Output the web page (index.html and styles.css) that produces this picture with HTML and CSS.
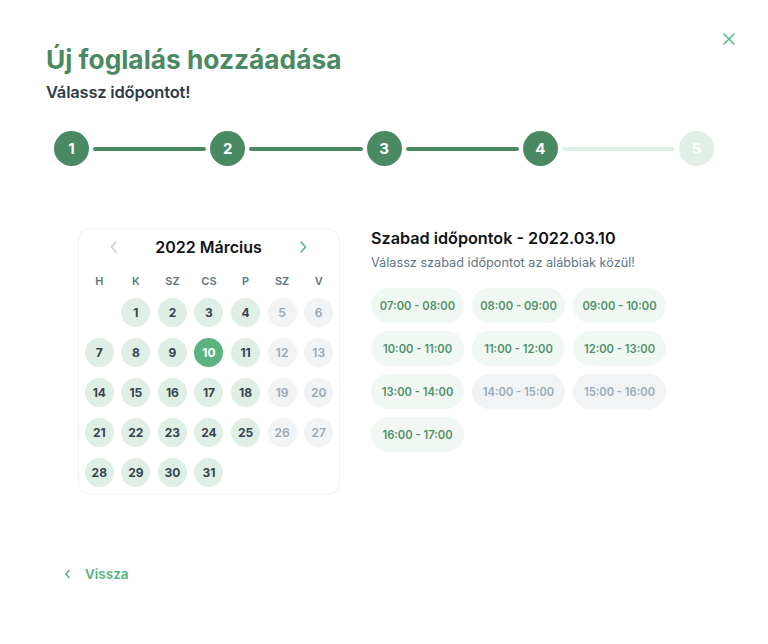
FILE: index.html
```html
<!DOCTYPE html>
<html lang="hu">
<head>
<meta charset="utf-8">
<title>Új foglalás hozzáadása</title>
<link rel="stylesheet" href="styles.css">
</head>
<body>
<div class="modal">
  <div class="header">
    <div class="heading">
      <h1 class="title">Új foglalás hozzáadása</h1>
      <p class="subtitle">Válassz időpontot!</p>
    </div>
    <button class="close" aria-label="Bezárás">
      <svg width="12" height="12" viewBox="0 0 12 12"><path d="M1 1L11 11M11 1L1 11" stroke="currentColor" stroke-width="1.6" stroke-linecap="round"/></svg>
    </button>
  </div>

  <div class="steps">
    <div class="step done">1</div><div class="line done"></div>
    <div class="step done">2</div><div class="line done"></div>
    <div class="step done">3</div><div class="line done"></div>
    <div class="step done">4</div><div class="line"></div>
    <div class="step">5</div>
  </div>

  <div class="content">
    <div class="calendar">
      <div class="cal-head">
        <span class="nav prev"><svg width="8" height="12" viewBox="0 0 8 12"><path d="M6 1L1.5 6L6 11" fill="none" stroke="currentColor" stroke-width="1.6" stroke-linecap="round" stroke-linejoin="round"/></svg></span>
        <span class="month">2022 Március</span>
        <span class="nav next"><svg width="8" height="12" viewBox="0 0 8 12"><path d="M2 1L6.5 6L2 11" fill="none" stroke="currentColor" stroke-width="1.6" stroke-linecap="round" stroke-linejoin="round"/></svg></span>
      </div>
      <div class="weekdays">
        <span>H</span><span>K</span><span>SZ</span><span>CS</span><span>P</span><span>SZ</span><span>V</span>
      </div>
      <div class="days">
        <span class="day empty"></span>
        <span class="day">1</span><span class="day">2</span><span class="day">3</span><span class="day">4</span><span class="day off">5</span><span class="day off">6</span>
        <span class="day">7</span><span class="day">8</span><span class="day">9</span><span class="day sel">10</span><span class="day">11</span><span class="day off">12</span><span class="day off">13</span>
        <span class="day">14</span><span class="day">15</span><span class="day">16</span><span class="day">17</span><span class="day">18</span><span class="day off">19</span><span class="day off">20</span>
        <span class="day">21</span><span class="day">22</span><span class="day">23</span><span class="day">24</span><span class="day">25</span><span class="day off">26</span><span class="day off">27</span>
        <span class="day">28</span><span class="day">29</span><span class="day">30</span><span class="day">31</span>
      </div>
    </div>

    <div class="slots-panel">
      <h2 class="slots-title">Szabad időpontok - 2022.03.10</h2>
      <p class="slots-sub">Válassz szabad időpontot az alábbiak közül!</p>
      <div class="slots">
        <span class="slot">07:00 - 08:00</span>
        <span class="slot">08:00 - 09:00</span>
        <span class="slot">09:00 - 10:00</span>
        <span class="slot">10:00 - 11:00</span>
        <span class="slot">11:00 - 12:00</span>
        <span class="slot">12:00 - 13:00</span>
        <span class="slot">13:00 - 14:00</span>
        <span class="slot off">14:00 - 15:00</span>
        <span class="slot off">15:00 - 16:00</span>
        <span class="slot">16:00 - 17:00</span>
      </div>
    </div>
  </div>

  <div class="footer">
    <button class="back">
      <svg width="7" height="10" viewBox="0 0 7 10"><path d="M5 1.5L1.8 5L5 8.5" fill="none" stroke="currentColor" stroke-width="1.6" stroke-linecap="round" stroke-linejoin="round"/></svg>
      <span>Vissza</span>
    </button>
  </div>
</div>
</body>
</html>
```

FILE: styles.css
```css
* { box-sizing: border-box; }
html, body { margin: 0; padding: 0; background: #ffffff; }
body {
  font-family: Inter, "Noto Sans", "DejaVu Sans", sans-serif;
  color: #2d3a45;
  width: 768px;
  height: 644px;
  overflow: hidden;
}
button { font: inherit; background: none; border: 0; padding: 0; cursor: pointer; }

.modal { padding: 44px 54px 0 46px; }

.header { display: flex; justify-content: space-between; align-items: flex-start; margin-right: -21px; }
.title {
  margin: 0;
  font-size: 26.3px;
  line-height: 32px;
  font-weight: 700;
  color: #4a8a63;
  letter-spacing: 0;
}
.subtitle {
  margin: 5px 0 0;
  font-size: 16.5px;
  line-height: 22px;
  font-weight: 600;
  color: #2f3b46;
  letter-spacing: -0.2px;
}
.close { color: #5dbb84; margin-top: -11px; width: 12px; height: 12px; display: flex; }

.steps { display: flex; align-items: center; margin: 28px 0 0 8px; }
.step {
  width: 35px; height: 35px; flex: none;
  border-radius: 50%;
  background: #e0f0e6;
  color: #ffffff;
  font-size: 15px; font-weight: 700;
  display: flex; align-items: center; justify-content: center;
}
.step.done { background: #4a8a63; }
.line { flex: 1; height: 4px; border-radius: 2px; margin: 0 4px; background: #e0f0e6; }
.line.done { background: #4a8a63; }

.content { display: flex; align-items: flex-start; gap: 31px; margin: 62px 0 0 32px; }

.calendar {
  width: 262px;
  border: 1px solid #edf3ef;
  border-radius: 12px;
  padding: 7px 2px 7px;
}
.cal-head { display: flex; align-items: center; justify-content: space-between; padding: 0 30px 0 29px; height: 22px; }
.nav { display: flex; width: 8px; height: 12px; }
.prev { color: #c5ced6; }
.next { color: #5bb37f; }
.month { font-size: 16px; font-weight: 600; color: #111418; }

.weekdays {
  display: grid; grid-template-columns: repeat(7, 1fr);
  margin-top: 15px; height: 16px; align-items: center;
  font-size: 11px; font-weight: 600; color: #5f7485; text-align: center;
}
.days {
  display: grid; grid-template-columns: repeat(7, 1fr);
  row-gap: 11px; margin-top: 9px;
  justify-items: center;
}
.day {
  width: 29px; height: 29px; border-radius: 50%;
  background: #dfefe5;
  display: flex; align-items: center; justify-content: center;
  font-size: 12px; font-weight: 700; color: #36444f;
}
.day.empty { background: none; }
.day.off { background: #f1f3f5; color: #97a8b5; font-weight: 600; }
.day.sel { background: #5bb37f; color: #ffffff; }

.slots-panel { width: 300px; }
.slots-title { margin: 0; font-size: 16.2px; line-height: 20px; font-weight: 600; color: #111418; }
.slots-sub { margin: 6px 0 0; font-size: 12.7px; line-height: 18px; color: #5f7485; }
.slots { display: grid; grid-template-columns: repeat(3, 93px); gap: 8px; margin-top: 16px; }
.slot {
  height: 35px; border-radius: 18px;
  background: #f1f8f4;
  display: flex; align-items: center; justify-content: center;
  font-size: 11.2px; font-weight: 600; color: #4f9068;
}
.slot.off { background: #f1f3f5; color: #9aabb8; }

.footer { margin: 69px 0 0 18px; }
.back { display: flex; align-items: center; gap: 14px; color: #55b37d; font-size: 13.5px; font-weight: 600; line-height: 20px; }
.back svg { display: block; }
```
